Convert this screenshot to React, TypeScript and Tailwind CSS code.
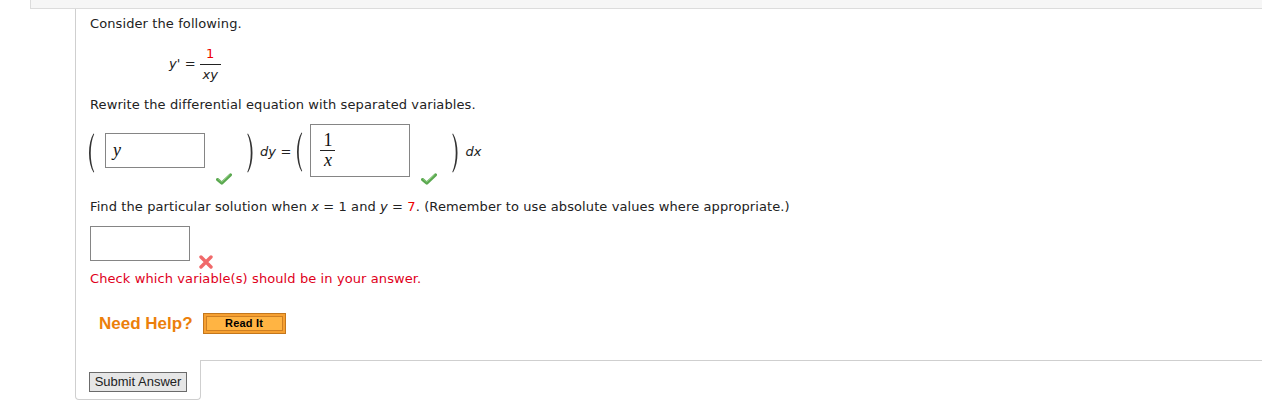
import React from "react";

const sans = "font-['DejaVu_Sans',Verdana,sans-serif]";
const arial = "font-['Liberation_Sans',Arial,sans-serif]";

function Paren({ side }: { side: "l" | "r" }) {
  const d =
    side === "l"
      ? "M6.5 0.5 C0.5 10 0.5 30 6.5 39.5 L7.2 39 C2.6 29 2.6 11 7.2 1 Z"
      : "M1 0.5 C7 10 7 30 1 39.5 L0.3 39 C4.9 29 4.9 11 0.3 1 Z";
  return (
    <svg width="8" height="40" viewBox="0 0 8 40" className="block">
      <path d={d} fill="#333" />
    </svg>
  );
}

function Check() {
  return (
    <svg width="16" height="12" viewBox="0 0 16 12" className="block">
      <path
        d="M1.5 6.5 L5.8 10.2 L14.5 1.8"
        fill="none"
        stroke="#5aa84f"
        strokeWidth="3"
        strokeLinecap="round"
        strokeLinejoin="round"
      />
      <path d="M2.5 6.3 L5.8 9 L13.5 1.8" fill="none" stroke="#8ccc7f" strokeWidth="1" strokeLinecap="round" />
    </svg>
  );
}

function Cross() {
  return (
    <svg width="14" height="14" viewBox="0 0 14 14" className="block">
      <path d="M2 2 L12 12 M12 2 L2 12" stroke="#f0696a" strokeWidth="3.4" strokeLinecap="round" />
    </svg>
  );
}

export default function App() {
  return (
    <div className={`w-[1262px] h-[412px] bg-white text-[13px] tracking-[0.1px] text-[#222] ${sans}`}>
      {/* top strip */}
      <div className="ml-[30px] h-[9px] bg-[#f6f6f6] border-b border-l border-[#dcdcdc]" />

      <div className="ml-[75px]">
        <div className="border-l border-[#cfcfcf] pl-[14px] pt-[7px] pb-[26px]">
          <div className="leading-[16px]">Consider the following.</div>

          {/* y' = 1/xy */}
          <div className="mt-[12px] ml-[79px] flex items-center">
            <span className="leading-[16px]">
              <i>y</i>' =
            </span>
            <span className="ml-[4px] flex flex-col items-center">
              <span className="leading-[20px] w-[21px] text-center text-[#e00] border-b border-[#222]">1</span>
              <span className="leading-[18px] pt-[1px]">
                <i>xy</i>
              </span>
            </span>
          </div>

          <div className="mt-[13px] leading-[16px]">
            Rewrite the differential equation with separated variables.
          </div>

          {/* separated equation */}
          <div className="mt-[11px] h-[62px] flex items-start">
            <div className="mt-[9px] ml-[-3px]">
              <Paren side="l" />
            </div>
            <div className="mt-[9px] ml-[10px] w-[100px] h-[35px] border border-[#858585] flex items-center pl-[7px]">
              <span className="font-['Liberation_Serif',serif] italic text-[18px] tracking-normal text-[#111]">y</span>
            </div>
            <div className="mt-[49px] ml-[11px]">
              <Check />
            </div>
            <div className="mt-[9px] ml-[15px]">
              <Paren side="r" />
            </div>
            <div className="mt-[20px] ml-[5px] leading-[16px]">
              <i>dy</i> =
            </div>
            <div className="mt-[8px] ml-[4px]">
              <Paren side="l" />
            </div>
            <div className="ml-[7px] w-[100px] h-[53px] border border-[#858585] flex items-center pl-[9px]">
              <span className="font-['Liberation_Serif',serif] flex flex-col items-center text-[18px] tracking-normal text-[#111]">
                <span className="leading-[19px] px-[3px] border-b border-[#222]">1</span>
                <span className="leading-[19px] italic">x</span>
              </span>
            </div>
            <div className="mt-[49px] ml-[11px]">
              <Check />
            </div>
            <div className="mt-[9px] ml-[15px]">
              <Paren side="r" />
            </div>
            <div className="mt-[20px] ml-[5px] leading-[16px]">
              <i>dx</i>
            </div>
          </div>

          <div className="mt-[13px] leading-[16px]">
            Find the particular solution when <i>x</i> = 1 and <i>y</i> ={" "}
            <span className="text-[#e00]">7</span>. (Remember to use absolute values where appropriate.)
          </div>

          <div className="mt-[11px] flex items-start">
            <div className="w-[100px] h-[35px] border border-[#858585]" />
            <div className="mt-[29px] ml-[9px]">
              <Cross />
            </div>
          </div>

          <div className="mt-[2px] leading-[16px] text-[#e0001b]">
            Check which variable(s) should be in your answer.
          </div>

          <div className="mt-[26px] ml-[9px] flex items-center h-[21px]">
            <span className={`${arial} font-bold text-[17px] tracking-normal text-[#ec7f0b]`}>Need Help?</span>
            <div className="ml-[10px] w-[83px] h-[21px] border border-[#c4771c] bg-[#f6a031] p-[2px]">
              <div
                className={`h-full border border-[#cf7f22] bg-[#ffb443] flex items-center justify-center ${arial} font-bold text-[11px] tracking-[0.2px] text-black`}
              >
                Read It
              </div>
            </div>
          </div>
        </div>

        {/* submit tab */}
        <div className="flex">
          <div className="w-[126px] h-[40px] border-l border-r border-b border-[#cfcfcf] rounded-b-[4px] pl-[13px] pt-[12px]">
            <button
              className={`w-[98px] h-[20px] border border-[#6b6b6b] bg-[#e6e6e6] ${arial} text-[13px] tracking-normal text-[#222] leading-[18px]`}
            >
              Submit Answer
            </button>
          </div>
          <div className="flex-1 border-t border-[#cfcfcf]" />
        </div>
      </div>
    </div>
  );
}
